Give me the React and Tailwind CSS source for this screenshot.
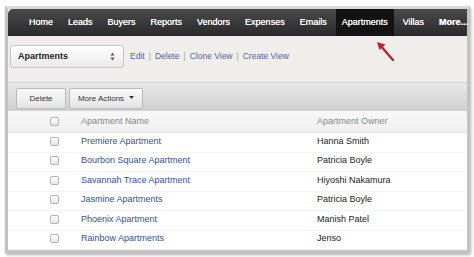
import React from 'react'

const tabs = ['Home', 'Leads', 'Buyers', 'Reports', 'Vendors', 'Expenses', 'Emails', 'Apartments', 'Villas', 'More...']

const rows = [
  ['Premiere Apartment', 'Hanna Smith'],
  ['Bourbon Square Apartment', 'Patricia Boyle'],
  ['Savannah Trace Apartment', 'Hiyoshi Nakamura'],
  ['Jasmine Apartments', 'Patricia Boyle'],
  ['Phoenix Apartment', 'Manish Patel'],
  ['Rainbow Apartments', 'Jenso'],
]

function Checkbox() {
  return (
    <div className="w-[9px] h-[9px] rounded-[2px] border border-[#b4b4b4] bg-gradient-to-b from-white to-[#e6e6e6]" />
  )
}

export default function App() {
  return (
    <div className="relative w-[474px] h-[257px] bg-white pt-[6px] pl-[5px] font-['Liberation_Sans',Arial,sans-serif]">
      <div className="w-[465px] h-[247px] border-[3px] border-[#c2c2c2] border-t-[#dadada] shadow-[1px_2px_3px_rgba(0,0,0,0.3)] bg-[#f0eeea] flex flex-col overflow-hidden">
        {/* top nav */}
        <div className="h-[27px] shrink-0 flex items-stretch pl-[15px] gap-[3px] rounded-tl-[5px] bg-gradient-to-b from-[#4a4a4a] to-[#2a2a2a]">
          {tabs.map(t => (
            <div
              key={t}
              className={
                'flex items-center px-[6px] text-[9px] text-white [text-shadow:0_0_0.3px_#fff] ' +
                (t === 'Apartments' ? 'bg-[#131313] ' : '') +
                (t === 'More...' ? 'font-bold' : '')
              }
            >
              {t}
            </div>
          ))}
        </div>

        {/* view selector */}
        <div className="h-[46px] shrink-0 flex items-start pt-[9px] pl-[2px]">
          <div className="w-[114px] h-[23px] flex items-center justify-between pl-[7px] pr-[8px] rounded-[3px] border border-[#c4c4c4] bg-gradient-to-b from-white to-[#e9e9e9]">
            <span className="text-[9px] font-bold text-[#222]">Apartments</span>
            <svg width="5" height="9" viewBox="0 0 5 9">
              <path d="M2.5 0.5 L4.5 3.5 L0.5 3.5 Z" fill="#555" />
              <path d="M2.5 8.5 L4.5 5.5 L0.5 5.5 Z" fill="#555" />
            </svg>
          </div>
          <div className="ml-[6px] h-[23px] flex items-center gap-[4px] text-[8.5px] text-[#4a679c]">
            <span>Edit</span>
            <span className="text-[#a0a0a0]">|</span>
            <span>Delete</span>
            <span className="text-[#a0a0a0]">|</span>
            <span>Clone View</span>
            <span className="text-[#a0a0a0]">|</span>
            <span>Create View</span>
          </div>
        </div>

        {/* toolbar */}
        <div className="h-[29px] shrink-0 flex items-start pt-[5px] pl-[8px] gap-[3px] border-t border-[#d2d2d2] bg-gradient-to-b from-[#e8e8e8] to-[#cecece]">
          <div className="w-[50px] h-[21px] flex items-center justify-center rounded-[2px] border border-[#b9b9b9] bg-gradient-to-b from-[#fafafa] to-[#e4e4e4] text-[8px] text-[#333]">
            Delete
          </div>
          <div className="w-[74px] h-[21px] flex items-center justify-center gap-[5px] rounded-[2px] border border-[#b9b9b9] bg-gradient-to-b from-[#fafafa] to-[#e4e4e4] text-[8px] text-[#333]">
            More Actions
            <svg width="5" height="3" viewBox="0 0 5 3" className="-mt-[3px]">
              <path d="M0 0 L5 0 L2.5 3 Z" fill="#333" />
            </svg>
          </div>
        </div>

        {/* header */}
        <div className="h-[22px] shrink-0 flex items-center bg-gradient-to-b from-[#f8f8f8] to-[#efefef] border-b border-[#e2e2e2] text-[9px] text-[#888]">
          <div className="w-[73px] pl-[42px]">
            <Checkbox />
          </div>
          <div className="w-[236px]">Apartment Name</div>
          <div>Apartment Owner</div>
        </div>

        {/* rows */}
        <div className="flex-1 bg-white">
          {rows.map(([name, owner]) => (
            <div key={name} className="h-[19.5px] flex items-center pb-[2px] mr-[3px] border-b border-[#f3f3f3] text-[9px]">
              <div className="w-[73px] pl-[42px]">
                <Checkbox />
              </div>
              <div className="w-[236px] text-[#2f5290]">{name}</div>
              <div className="text-[#222]">{owner}</div>
            </div>
          ))}
        </div>
      </div>

      {/* red pointer arrow */}
      <svg className="absolute left-[370px] top-[36px]" width="30" height="30" viewBox="0 0 30 30">
        <path d="M23 24 L10 9" stroke="#b3262b" strokeWidth="2.4" strokeLinecap="round" />
        <path d="M7 6 L15.5 8.5 L9.5 14 Z" fill="#b3262b" />
      </svg>
    </div>
  )
}
